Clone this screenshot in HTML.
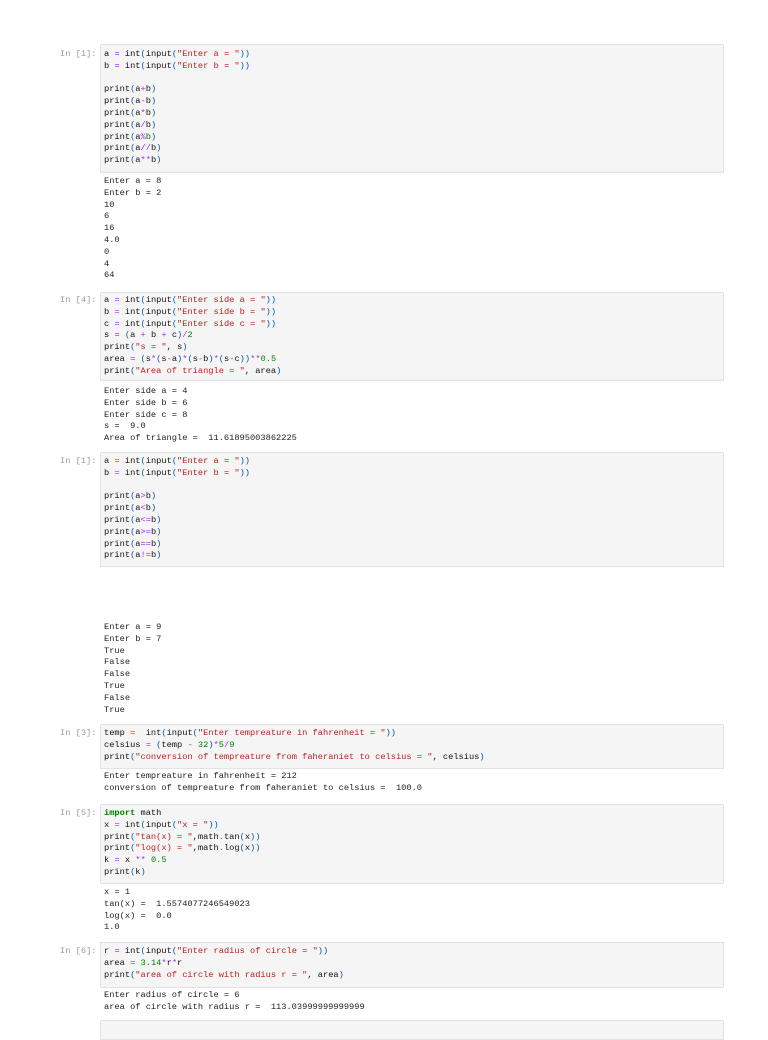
<!DOCTYPE html>
<html><head><meta charset="utf-8"><style>
body{margin:0;width:768px;height:1024px;background:#fff;position:relative;overflow:hidden;font-family:"Liberation Mono",monospace;font-size:8.7px;}
.box{position:absolute;left:100px;width:624px;background:#f5f5f5;border:1px solid #e2e2e2;box-sizing:border-box;}
.t{position:absolute;left:104px;white-space:pre;line-height:11.8px;color:#111;}
.o{color:#222;}
.p{position:absolute;left:60px;color:#999;white-space:pre;line-height:11.8px;}
.s{color:#ba2121}.op{color:#aa22ff}.n{color:#008000}.k{color:#008000;font-weight:bold}.b{color:#0055aa}
</style></head><body>
<div class="box" style="top:44px;height:129px"></div>
<div class="p" style="top:49px">In [1]:</div>
<div class="t" style="top:49px">a <span class="op">=</span> int<span class="b">(</span>input<span class="b">(</span><span class="s">"Enter a = "</span><span class="b">))</span>
b <span class="op">=</span> int<span class="b">(</span>input<span class="b">(</span><span class="s">"Enter b = "</span><span class="b">))</span>

print<span class="b">(</span>a<span class="op">+</span>b<span class="b">)</span>
print<span class="b">(</span>a<span class="op">-</span>b<span class="b">)</span>
print<span class="b">(</span>a<span class="op">*</span>b<span class="b">)</span>
print<span class="b">(</span>a<span class="op">/</span>b<span class="b">)</span>
print<span class="b">(</span>a<span class="op">%</span><span class="n">b</span><span class="b">)</span>
print<span class="b">(</span>a<span class="op">//</span>b<span class="b">)</span>
print<span class="b">(</span>a<span class="op">**</span>b<span class="b">)</span></div>
<div class="t o" style="top:176px">Enter a = 8
Enter b = 2
10
6
16
4.0
0
4
64</div>

<div class="box" style="top:292px;height:89px"></div>
<div class="p" style="top:295px">In [4]:</div>
<div class="t" style="top:295px">a <span class="op">=</span> int<span class="b">(</span>input<span class="b">(</span><span class="s">"Enter side a = "</span><span class="b">))</span>
b <span class="op">=</span> int<span class="b">(</span>input<span class="b">(</span><span class="s">"Enter side b = "</span><span class="b">))</span>
c <span class="op">=</span> int<span class="b">(</span>input<span class="b">(</span><span class="s">"Enter side c = "</span><span class="b">))</span>
s <span class="op">=</span> <span class="b">(</span>a <span class="op">+</span> b <span class="op">+</span> c<span class="b">)</span><span class="op">/</span><span class="n">2</span>
print<span class="b">(</span><span class="s">"s = "</span>, s<span class="b">)</span>
area <span class="op">=</span> <span class="b">(</span>s<span class="op">*</span><span class="b">(</span>s<span class="op">-</span>a<span class="b">)</span><span class="op">*</span><span class="b">(</span>s<span class="op">-</span>b<span class="b">)</span><span class="op">*</span><span class="b">(</span>s<span class="op">-</span>c<span class="b">))</span><span class="op">**</span><span class="n">0.5</span>
print<span class="b">(</span><span class="s">"Area of triangle = "</span>, area<span class="b">)</span></div>
<div class="t o" style="top:386px">Enter side a = 4
Enter side b = 6
Enter side c = 8
s =  9.0
Area of triangle =  11.61895003862225</div>

<div class="box" style="top:452px;height:115px"></div>
<div class="p" style="top:456px">In [1]:</div>
<div class="t" style="top:456px">a <span class="op">=</span> int<span class="b">(</span>input<span class="b">(</span><span class="s">"Enter a = "</span><span class="b">))</span>
b <span class="op">=</span> int<span class="b">(</span>input<span class="b">(</span><span class="s">"Enter b = "</span><span class="b">))</span>

print<span class="b">(</span>a<span class="op">&gt;</span>b<span class="b">)</span>
print<span class="b">(</span>a<span class="op">&lt;</span>b<span class="b">)</span>
print<span class="b">(</span>a<span class="op">&lt;=</span>b<span class="b">)</span>
print<span class="b">(</span>a<span class="op">&gt;=</span>b<span class="b">)</span>
print<span class="b">(</span>a<span class="op">==</span>b<span class="b">)</span>
print<span class="b">(</span>a<span class="op">!=</span>b<span class="b">)</span></div>
<div class="t o" style="top:622px">Enter a = 9
Enter b = 7
True
False
False
True
False
True</div>

<div class="box" style="top:724px;height:45px"></div>
<div class="p" style="top:728px">In [3]:</div>
<div class="t" style="top:728px">temp <span class="op">=</span>  int<span class="b">(</span>input<span class="b">(</span><span class="s">"Enter tempreature in fahrenheit = "</span><span class="b">))</span>
celsius <span class="op">=</span> <span class="b">(</span>temp <span class="op">-</span> <span class="n">32</span><span class="b">)</span><span class="op">*</span><span class="n">5</span><span class="op">/</span><span class="n">9</span>
print<span class="b">(</span><span class="s">"conversion of tempreature from faheraniet to celsius = "</span>, celsius<span class="b">)</span></div>
<div class="t o" style="top:771px">Enter tempreature in fahrenheit = 212
conversion of tempreature from faheraniet to celsius =  100.0</div>

<div class="box" style="top:804px;height:80px"></div>
<div class="p" style="top:808px">In [5]:</div>
<div class="t" style="top:808px"><span class="k">import</span> math
x <span class="op">=</span> int<span class="b">(</span>input<span class="b">(</span><span class="s">"x = "</span><span class="b">))</span>
print<span class="b">(</span><span class="s">"tan(x) = "</span>,math<span class="op">.</span>tan<span class="b">(</span>x<span class="b">))</span>
print<span class="b">(</span><span class="s">"log(x) = "</span>,math<span class="op">.</span>log<span class="b">(</span>x<span class="b">))</span>
k <span class="op">=</span> x <span class="op">**</span> <span class="n">0.5</span>
print<span class="b">(</span>k<span class="b">)</span></div>
<div class="t o" style="top:887px">x = 1
tan(x) =  1.5574077246549023
log(x) =  0.0
1.0</div>

<div class="box" style="top:942px;height:46px"></div>
<div class="p" style="top:946px">In [6]:</div>
<div class="t" style="top:946px">r <span class="op">=</span> int<span class="b">(</span>input<span class="b">(</span><span class="s">"Enter radius of circle = "</span><span class="b">))</span>
area <span class="op">=</span> <span class="n">3.14</span><span class="op">*</span>r<span class="op">*</span>r
print<span class="b">(</span><span class="s">"area of circle with radius r = "</span>, area<span class="b">)</span></div>
<div class="t o" style="top:990px">Enter radius of circle = 6
area of circle with radius r =  113.03999999999999</div>
<div class="box" style="top:1020px;height:20px"></div>
</body></html>
